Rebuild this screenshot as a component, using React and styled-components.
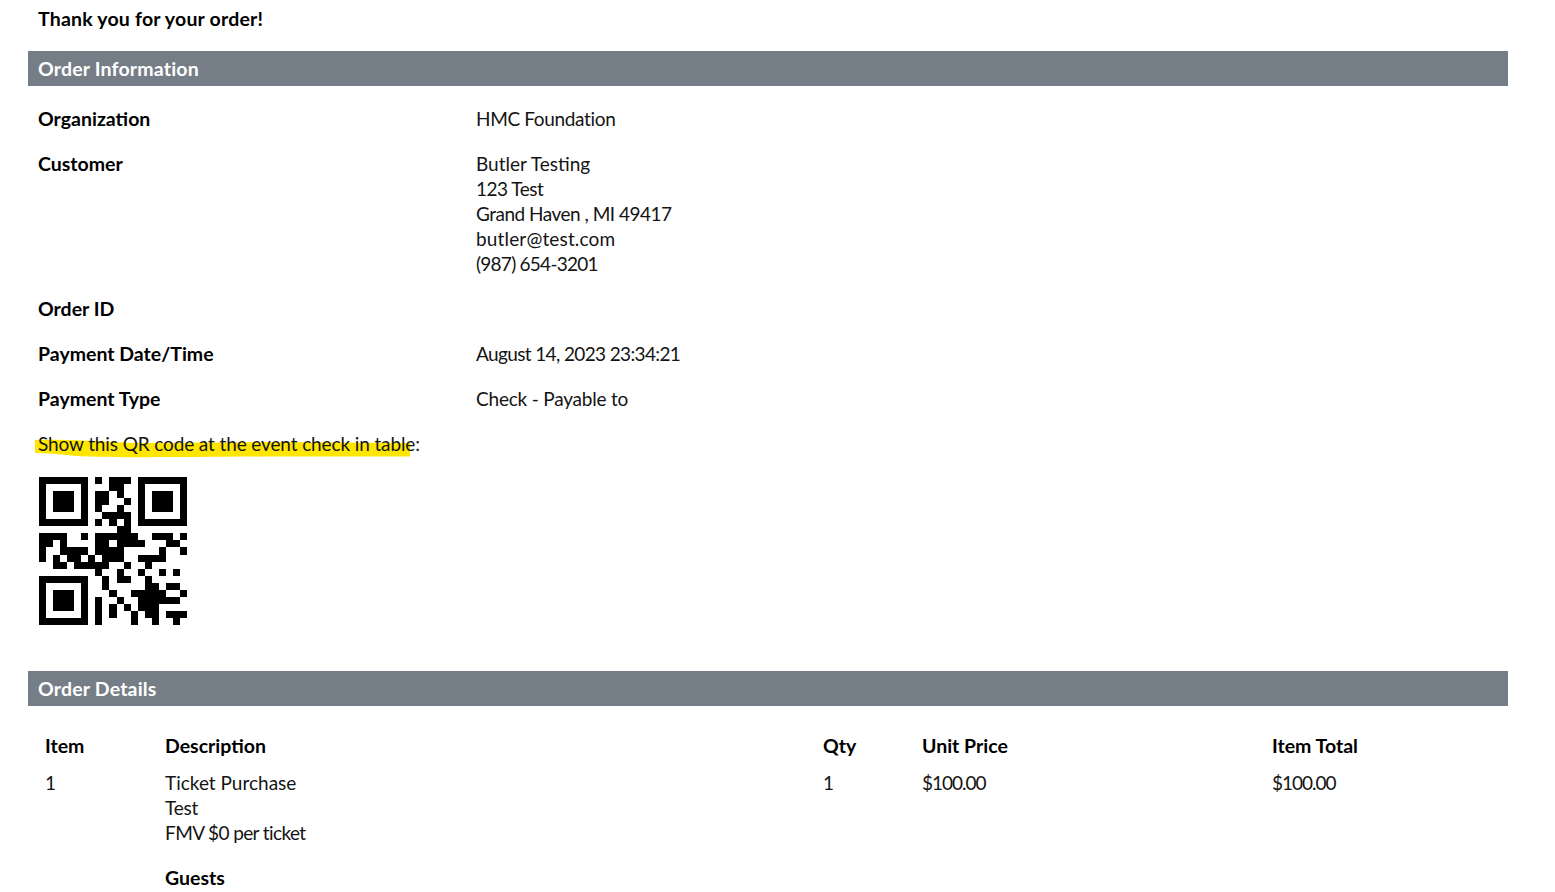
import React from "react";
import styled, { createGlobalStyle } from "styled-components";

const GlobalStyle = createGlobalStyle`
  html, body {
    margin: 0;
    padding: 0;
    background: #fff;
    overflow: hidden;
  }
  body {
    font-family: Lato, "Noto Sans", sans-serif;
    font-size: 19px;
    line-height: 25px;
    color: #141414;
  }
`;

const Page = styled.div`
  width: 1480px;
  margin-left: 28px;
  padding-top: 6px;
`;

const Thanks = styled.div`
  padding-left: 10px;
  font-size: 19.5px;
  font-weight: 700;
  letter-spacing: 0.2px;
  color: #000;
  margin-bottom: 20px;
`;

const SectionBar = styled.div`
  height: 35px;
  line-height: 36px;
  padding-left: 10px;
  background-color: #757e87;
  color: #fff;
  font-size: 19.5px;
  font-weight: 700;
  letter-spacing: 0.18px;
`;

const InfoList = styled.div`
  display: flex;
  flex-direction: column;
  gap: 20px;
  padding: 20px 0 0 10px;
`;

const InfoRow = styled.div`
  display: grid;
  grid-template-columns: 438px 1fr;
  min-height: 25px;
`;

const Label = styled.div`
  font-size: 19.5px;
  font-weight: 700;
  color: #000;
`;

const Value = styled.div``;

const Line = styled.div`
  letter-spacing: ${(p) => p.$spacing || 0}px;
`;

const QrNote = styled.div`
  position: relative;
  padding: 20px 0 0 10px;
  letter-spacing: -0.12px;
`;

const NoteText = styled.span`
  position: relative;
`;

const Scribble = styled.svg`
  position: absolute;
  left: 7px;
  top: 25px;
  width: 376px;
  height: 22px;
`;

const QrCode = styled.svg`
  display: block;
  width: 148px;
  height: 148px;
  margin: 21px 0 46px 11px;
`;

const Items = styled.div`
  padding: 27px 0 0 17px;
`;

const ItemRow = styled.div`
  display: grid;
  grid-template-columns: 120px 658px 99px 350px 1fr;
  margin-bottom: 12px;
`;

const HeadCell = styled.div`
  font-size: 19.5px;
  font-weight: 700;
  color: #000;
`;

const Cell = styled.div``;

const Guests = styled.div`
  margin-top: 20px;
  font-size: 19.5px;
  font-weight: 700;
  color: #000;
`;

const QR_ROWS = [
  "111111101011101111111",
  "100000100011001000001",
  "101110101101001011101",
  "101110101100101011101",
  "101110101001001011101",
  "100000100111101000001",
  "111111101010101111111",
  "000000000001100000000",
  "111100101111110011101",
  "110100001101111000110",
  "100111101111000001001",
  "101011010111001111000",
  "001101111100100100000",
  "000000001001001001010",
  "111111100101100100000",
  "100000100100000110110",
  "101110100010011111001",
  "101110101001001111110",
  "101110101010101110000",
  "100000101010010110111",
  "111111101000010010010",
];

function QrModules() {
  return QR_ROWS.flatMap((row, y) =>
    [...row].map((bit, x) =>
      bit === "1" ? <rect key={`${x}-${y}`} x={x} y={y} width="1" height="1" /> : null
    )
  );
}

function InfoItem({ label, children }) {
  return (
    <InfoRow>
      <Label>{label}</Label>
      <Value>{children}</Value>
    </InfoRow>
  );
}

export default function App() {
  return (
    <Page>
      <GlobalStyle />
      <Thanks>Thank you for your order!</Thanks>
      <SectionBar>Order Information</SectionBar>
      <InfoList>
        <InfoItem label="Organization">
          <Line $spacing={-0.35}>HMC Foundation</Line>
        </InfoItem>
        <InfoItem label="Customer">
          <Line>Butler Testing</Line>
          <Line $spacing={-0.5}>123 Test</Line>
          <Line $spacing={-0.5}>Grand Haven , MI 49417</Line>
          <Line $spacing={0.15}>butler@test.com</Line>
          <Line $spacing={-0.75}>(987) 654-3201</Line>
        </InfoItem>
        <InfoItem label="Order ID" />
        <InfoItem label="Payment Date/Time">
          <Line $spacing={-0.63}>August 14, 2023 23:34:21</Line>
        </InfoItem>
        <InfoItem label="Payment Type">
          <Line $spacing={-0.2}>Check - Payable to</Line>
        </InfoItem>
      </InfoList>
      <QrNote>
        <Scribble viewBox="0 0 376 22" preserveAspectRatio="none">
          <path
            d="M0 4 C20 3 60 5 100 7 L240 6 L375 7 L375 20.5 L240 20.5 C150 21 80 22 40 20 C25 18 10 17 0 17 Z"
            fill="#ffe600"
          />
        </Scribble>
        <NoteText>Show this QR code at the event check in table:</NoteText>
      </QrNote>
      <QrCode viewBox="0 0 21 21" shapeRendering="crispEdges">
        <QrModules />
      </QrCode>
      <SectionBar>Order Details</SectionBar>
      <Items>
        <ItemRow>
          <HeadCell>Item</HeadCell>
          <HeadCell>Description</HeadCell>
          <HeadCell>Qty</HeadCell>
          <HeadCell>Unit Price</HeadCell>
          <HeadCell>Item Total</HeadCell>
        </ItemRow>
        <ItemRow>
          <Cell>1</Cell>
          <Cell>
            <Line>Ticket Purchase</Line>
            <Line $spacing={-0.2}>Test</Line>
            <Line $spacing={-0.6}>FMV $0 per ticket</Line>
            <Guests>Guests</Guests>
          </Cell>
          <Cell>1</Cell>
          <Cell>
            <Line $spacing={-1}>$100.00</Line>
          </Cell>
          <Cell>
            <Line $spacing={-1}>$100.00</Line>
          </Cell>
        </ItemRow>
      </Items>
    </Page>
  );
}
